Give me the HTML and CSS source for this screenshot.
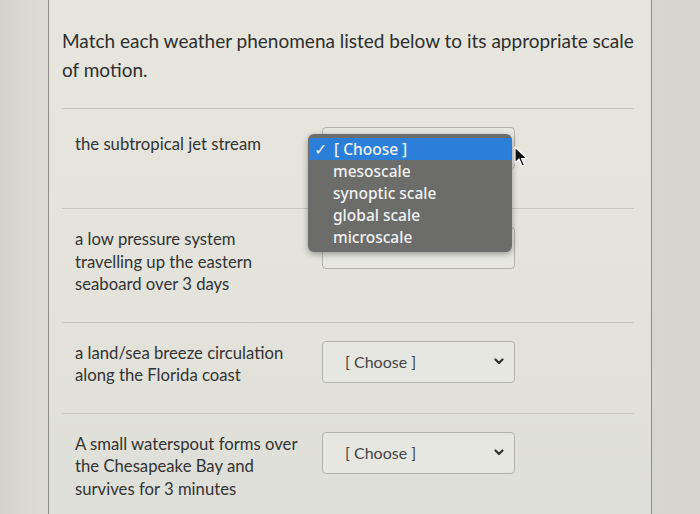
FILE: index.html
```html
<!DOCTYPE html>
<html>
<head>
<meta charset="utf-8">
<link rel="stylesheet" href="styles.css">
</head>
<body>
<div class="page">
  <div class="panel">
    <p class="question">Match each weather phenomena listed below to its appropriate scale of motion.</p>
    <div class="row row-first">
      <div class="label">the subtropical jet stream</div>
      <div class="select-wrap">
        <div class="select"><span class="covered">[ Choose ]</span><svg class="chev" width="10" height="7" viewBox="0 0 10 7"><path d="M1.5 1.5 L5 5 L8.5 1.5" fill="none" stroke="#333" stroke-width="2.2" stroke-linecap="round" stroke-linejoin="round"/></svg></div>
        <ul class="menu">
          <li class="active"><span class="check">✓</span>[ Choose ]</li>
          <li>mesoscale</li>
          <li>synoptic scale</li>
          <li>global scale</li>
          <li>microscale</li>
        </ul>
        <svg class="cursor" width="14" height="22" viewBox="0 0 14 22"><path d="M1 1 L1 17 L5 13 L8 20 L10.5 19 L7.5 12.5 L13 12.5 Z" fill="#111" stroke="#fff" stroke-width="1.2" stroke-linejoin="round"/></svg>
      </div>
    </div>
    <div class="row">
      <div class="label">a low pressure system travelling up the eastern seaboard over 3 days</div>
      <div class="select-wrap">
        <div class="select"><span class="covered">[ Choose ]</span><svg class="chev" width="10" height="7" viewBox="0 0 10 7"><path d="M1.5 1.5 L5 5 L8.5 1.5" fill="none" stroke="#333" stroke-width="2.2" stroke-linecap="round" stroke-linejoin="round"/></svg></div>
      </div>
    </div>
    <div class="row">
      <div class="label">a land/sea breeze circulation along the Florida coast</div>
      <div class="select-wrap">
        <div class="select"><span>[ Choose ]</span><svg class="chev" width="10" height="7" viewBox="0 0 10 7"><path d="M1.5 1.5 L5 5 L8.5 1.5" fill="none" stroke="#333" stroke-width="2.2" stroke-linecap="round" stroke-linejoin="round"/></svg></div>
      </div>
    </div>
    <div class="row">
      <div class="label">A small waterspout forms over the Chesapeake Bay and survives for 3 minutes</div>
      <div class="select-wrap">
        <div class="select"><span>[ Choose ]</span><svg class="chev" width="10" height="7" viewBox="0 0 10 7"><path d="M1.5 1.5 L5 5 L8.5 1.5" fill="none" stroke="#333" stroke-width="2.2" stroke-linecap="round" stroke-linejoin="round"/></svg></div>
      </div>
    </div>
  </div>
</div>
</body>
</html>
```
FILE: styles.css
```css
html, body {
  margin: 0;
  padding: 0;
}
body {
  background: #d6d6ce;
  font-family: Lato, "Liberation Sans", sans-serif;
  color: #333;
  overflow: hidden;
}
.page {
  width: 700px;
  height: 514px;
  background: linear-gradient(90deg, #d3d3cb 0%, #dcdcd5 6%, #d6d6cd 100%);
}
.panel {
  margin-left: 48px;
  width: 604px;
  height: 514px;
  box-sizing: border-box;
  border-left: 1px solid #8c8c86;
  border-right: 1px solid #8c8c86;
  background: linear-gradient(180deg, #e6e6df 0%, #e3e3dc 60%, #dedfd8 100%);
  padding: 26px 17px 0 13px;
}
.question {
  margin: 0 0 24px 0;
  font-size: 19px;
  line-height: 29px;
  color: #2e2e2e;
}
.row {
  border-top: 1px solid #c6c6bf;
  display: grid;
  grid-template-columns: 230px 195px;
  column-gap: 15px;
  padding: 18px 0 26px 13px;
  box-sizing: border-box;
}
.row-first {
  min-height: 100px;
}
.label {
  padding-top: 1px;
  font-size: 16.7px;
  line-height: 22.5px;
  color: #333;
  max-width: 228px;
}
.row-first .label {
  padding-top: 6px;
  max-width: 232px;
}
.select-wrap {
  position: relative;
  margin-left: 2px;
}
.select {
  height: 42px;
  box-sizing: border-box;
  border: 1px solid #b2b2ab;
  border-radius: 4px;
  background: #e7e7e1;
  display: flex;
  align-items: center;
  justify-content: space-between;
  padding: 0 10px 0 22px;
  font-size: 16px;
  color: #444;
}
.covered {
  visibility: hidden;
}
.chev {
  display: block;
}
.menu {
  position: absolute;
  left: -14px;
  top: 7px;
  width: 204px;
  margin: 0;
  padding: 4px 0;
  list-style: none;
  background: #6c6c6a;
  border-radius: 6px;
  box-shadow: 0 2px 6px rgba(0,0,0,0.35);
  font-family: "Noto Sans", "Open Sans", sans-serif;
  font-size: 15.5px;
  font-weight: 500;
  color: #f1f1f1;
  z-index: 2;
}
.menu li {
  height: 22px;
  line-height: 22px;
  padding-left: 25px;
  position: relative;
}
.menu li.active {
  background: #2c7fd8;
  margin: 0 1px;
}
.check {
  position: absolute;
  left: 5px;
  top: 0;
  font-size: 16px;
}
.cursor {
  position: absolute;
  left: 192px;
  top: 19px;
  z-index: 3;
}
```
